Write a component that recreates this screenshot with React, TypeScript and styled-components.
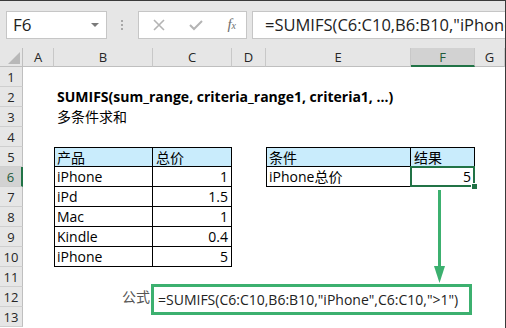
import styled, { createGlobalStyle } from "styled-components";

const GlobalStyle = createGlobalStyle`
  body {
    margin: 0;
    background: #ffffff;
    font-family: "Open Sans", "Noto Sans CJK SC", sans-serif;
  }
`;

const GREEN = "#217346";
const ARROW = "#3cb06f";
const FONT = `"Open Sans", "Noto Sans CJK SC", sans-serif`;

const Window = styled.div`
  position: relative;
  width: 505px;
  height: 327px;
  border-top: 1px solid #3a3a3a;
  border-right: 1px solid #3a3a3a;
  border-bottom: 1px solid #3a3a3a;
  overflow: hidden;
  background: #ffffff;
`;

const FormulaBar = styled.div`
  display: flex;
  align-items: center;
  height: 47px;
  padding-left: 6px;
  background: #e6e6e6;
`;

const NameBox = styled.div`
  box-sizing: border-box;
  display: flex;
  align-items: center;
  justify-content: space-between;
  width: 101px;
  height: 28px;
  padding: 0 7px 0 6px;
  background: #ffffff;
  border: 1px solid #c6c6c6;
  font-size: 17px;
  color: #222;
`;

const Caret = styled.span`
  width: 0;
  height: 0;
  border-left: 4px solid transparent;
  border-right: 4px solid transparent;
  border-top: 4px solid #7a7a7a;
`;

const Dots = styled.div`
  display: flex;
  flex-direction: column;
  gap: 2px;
  margin-left: 14px;
  span {
    width: 2px;
    height: 2px;
    background: #a8a8a8;
  }
`;

const ButtonBox = styled.div`
  box-sizing: border-box;
  display: flex;
  align-items: center;
  justify-content: space-between;
  width: 109px;
  height: 28px;
  margin-left: 15px;
  padding: 0 10px 0 14px;
  background: #ffffff;
  border: 1px solid #c6c6c6;
`;

const Fx = styled.span`
  font-family: "Liberation Serif", serif;
  font-style: italic;
  font-size: 15px;
  color: #6e6e6e;
  sub {
    font-size: 10px;
    vertical-align: baseline;
  }
`;

const FormulaInput = styled.div`
  box-sizing: border-box;
  flex: 1;
  height: 28px;
  margin-left: 5px;
  padding-left: 12px;
  background: #ffffff;
  border: 1px solid #c6c6c6;
  border-right: none;
  font-size: 16.5px;
  line-height: 25px;
  color: #222;
  white-space: nowrap;
  overflow: hidden;
`;

const Sheet = styled.div`
  display: grid;
  grid-template-columns: 23px 31px 99px 79px 34px 145px 64px 1fr;
  grid-template-rows: 19px repeat(13, 20px);
  font-family: ${FONT};
`;

const Corner = styled.div`
  position: relative;
  background: #e6e6e6;
  border-right: 1px solid #bfbfbf;
  border-bottom: 1px solid #bfbfbf;
  box-sizing: border-box;
  svg {
    position: absolute;
    right: 2px;
    bottom: 2px;
  }
`;

const ColHeader = styled.div<{ $active?: boolean }>`
  box-sizing: border-box;
  display: flex;
  align-items: center;
  justify-content: center;
  background: ${(p) => (p.$active ? "#d2d2d2" : "#e6e6e6")};
  border-bottom: ${(p) => (p.$active ? `2px solid ${GREEN}` : "1px solid #bfbfbf")};
  border-right: 1px solid #c8c8c8;
  font-size: 13px;
  color: ${(p) => (p.$active ? "#1f5a3a" : "#262626")};
`;

const RowHeader = styled.div<{ $active?: boolean }>`
  box-sizing: border-box;
  display: flex;
  align-items: center;
  justify-content: center;
  background: ${(p) => (p.$active ? "#d2d2d2" : "#e6e6e6")};
  border-right: ${(p) => (p.$active ? `2px solid ${GREEN}` : "1px solid #bfbfbf")};
  border-bottom: 1px solid #cfcfcf;
  font-size: 13px;
  color: ${(p) => (p.$active ? "#1f5a3a" : "#262626")};
`;

type CellSpec = {
  text?: string;
  align?: "left" | "right";
  bold?: boolean;
  fill?: boolean;
  muted?: boolean;
  left?: boolean;
  top?: boolean;
  boxed?: boolean;
  selected?: boolean;
};

const Cell = styled.div<{
  $align: string;
  $bold?: boolean;
  $fill?: boolean;
  $muted?: boolean;
  $left?: boolean;
  $top?: boolean;
  $boxed?: boolean;
}>`
  position: relative;
  box-sizing: border-box;
  padding: 0 3px;
  font-size: 14px;
  line-height: 19px;
  white-space: nowrap;
  text-align: ${(p) => p.$align};
  font-weight: ${(p) => (p.$bold ? 700 : 400)};
  color: ${(p) => (p.$muted ? "#555" : "#000")};
  background: ${(p) => (p.$fill ? "#c9ecfc" : "transparent")};
  border-right: ${(p) => (p.$boxed ? "1px solid #000" : "none")};
  border-bottom: ${(p) => (p.$boxed ? "1px solid #000" : "none")};
  border-left: ${(p) => (p.$left ? "1px solid #000" : "none")};
  border-top: ${(p) => (p.$top ? "1px solid #000" : "none")};
  ${(p) => (p.$left ? "padding-left: 2px;" : "")}
`;

const Selection = styled.div`
  position: absolute;
  inset: -1px -1px -1px -1px;
  border: 2px solid ${GREEN};
  pointer-events: none;
  &::after {
    content: "";
    position: absolute;
    right: -5px;
    bottom: -5px;
    width: 5px;
    height: 5px;
    background: ${GREEN};
    border: 1px solid #fff;
  }
`;

const Callout = styled.div`
  position: absolute;
  left: 151px;
  top: 283px;
  box-sizing: border-box;
  width: 321px;
  height: 31px;
  padding-left: 4px;
  border: 3px solid ${ARROW};
  background: #ffffff;
  font-family: ${FONT};
  font-size: 14px;
  line-height: 25px;
  color: #222;
  white-space: nowrap;
`;

const Arrow = styled.svg`
  position: absolute;
  left: 430px;
  top: 189px;
`;

const columns = ["A", "B", "C", "D", "E", "F", "G"];

const cells: Record<string, CellSpec> = {
  B2: { text: "SUMIFS(sum_range, criteria_range1, criteria1, ...)", bold: true },
  B3: { text: "多条件求和" },
  B5: { text: "产品", fill: true, boxed: true, left: true, top: true },
  C5: { text: "总价", fill: true, boxed: true, top: true },
  B6: { text: "iPhone", boxed: true, left: true },
  C6: { text: "1", align: "right", boxed: true },
  B7: { text: "iPd", boxed: true, left: true },
  C7: { text: "1.5", align: "right", boxed: true },
  B8: { text: "Mac", boxed: true, left: true },
  C8: { text: "1", align: "right", boxed: true },
  B9: { text: "Kindle", boxed: true, left: true },
  C9: { text: "0.4", align: "right", boxed: true },
  B10: { text: "iPhone", boxed: true, left: true },
  C10: { text: "5", align: "right", boxed: true },
  E5: { text: "条件", fill: true, boxed: true, left: true, top: true },
  F5: { text: "结果", fill: true, boxed: true, top: true },
  E6: { text: "iPhone总价", boxed: true, left: true },
  F6: { text: "5", align: "right", boxed: true, selected: true },
  B12: { text: "公式", align: "right", muted: true },
};

const rows = Array.from({ length: 13 }, (_, i) => i + 1);

export default function App() {
  return (
    <>
      <GlobalStyle />
      <Window>
        <FormulaBar>
          <NameBox>
            F6
            <Caret />
          </NameBox>
          <Dots>
            <span />
            <span />
            <span />
          </Dots>
          <ButtonBox>
            <svg width="12" height="12" viewBox="0 0 12 12">
              <path d="M1 1 L11 11 M11 1 L1 11" stroke="#b4b4b4" strokeWidth="1.6" />
            </svg>
            <svg width="14" height="12" viewBox="0 0 14 12">
              <path d="M1 6 L5 10 L13 2" stroke="#b4b4b4" strokeWidth="2" fill="none" />
            </svg>
            <Fx>
              f<sub>x</sub>
            </Fx>
          </ButtonBox>
          <FormulaInput>=SUMIFS(C6:C10,B6:B10,"iPhone",C6:C10,"&gt;1")</FormulaInput>
        </FormulaBar>
        <Sheet>
          <Corner>
            <svg width="12" height="12" viewBox="0 0 12 12">
              <path d="M12 0 L12 12 L0 12 Z" fill="#b8b8b8" />
            </svg>
          </Corner>
          {columns.map((c) => (
            <ColHeader key={c} $active={c === "F"}>
              {c}
            </ColHeader>
          ))}
          {rows.map((r) => (
            <>
              <RowHeader key={`h${r}`} $active={r === 6}>
                {r}
              </RowHeader>
              {columns.map((c) => {
                const spec = cells[`${c}${r}`] ?? {};
                return (
                  <Cell
                    key={`${c}${r}`}
                    $align={spec.align ?? "left"}
                    $bold={spec.bold}
                    $fill={spec.fill}
                    $muted={spec.muted}
                    $left={spec.left}
                    $top={spec.top}
                    $boxed={spec.boxed}
                  >
                    {spec.text}
                    {spec.selected && <Selection />}
                  </Cell>
                );
              })}
            </>
          ))}
        </Sheet>
        <Arrow width="20" height="95" viewBox="0 0 20 95">
          <rect x="8" y="0" width="3" height="78" fill={ARROW} />
          <path d="M4 76 L15 76 L9.5 93 Z" fill={ARROW} />
        </Arrow>
        <Callout>=SUMIFS(C6:C10,B6:B10,"iPhone",C6:C10,"&gt;1")</Callout>
      </Window>
    </>
  );
}
